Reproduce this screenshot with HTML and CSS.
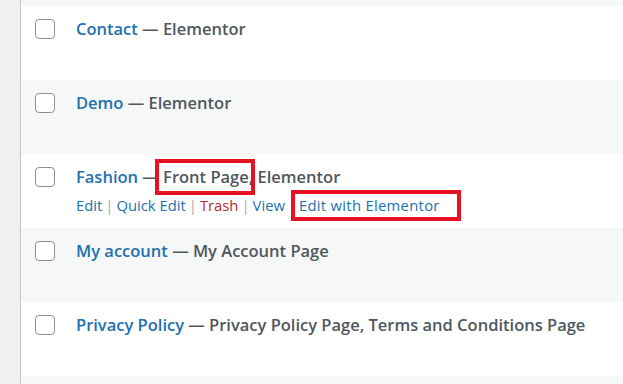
FILE: index.html
```html
<!DOCTYPE html>
<html lang="en">

<head>
    <meta charset="UTF-8">
    <meta name="viewport" content="width=device-width, initial-scale=1.0">
    <title>Pages</title>
    <link rel="stylesheet" href="styles.css">
</head>

<body>
    <div class="wrap">
        <div class="list">
            <div class="row alt stub"></div>

            <div class="row">
                <div class="check"><span class="box"></span></div>
                <div class="title">
                    <a class="row-title" href="#">Contact</a><span class="state"> — Elementor</span>
                </div>
            </div>

            <div class="row alt">
                <div class="check"><span class="box"></span></div>
                <div class="title">
                    <a class="row-title" href="#">Demo</a><span class="state"> — Elementor</span>
                </div>
            </div>

            <div class="row">
                <div class="check"><span class="box"></span></div>
                <div class="title">
                    <a class="row-title" href="#">Fashion</a><span class="state"> — <span class="mark mark-front">Front Page</span>, Elementor</span>
                    <div class="actions">
                        <a href="#">Edit</a><span class="sep">|</span><a href="#">Quick Edit</a><span class="sep">|</span><a class="trash" href="#">Trash</a><span class="sep">|</span><a href="#">View</a><span class="gap"></span><a class="mark mark-edit" href="#">Edit with Elementor</a>
                    </div>
                </div>
            </div>

            <div class="row alt">
                <div class="check"><span class="box"></span></div>
                <div class="title">
                    <a class="row-title" href="#">My account</a><span class="state"> — My Account Page</span>
                </div>
            </div>

            <div class="row">
                <div class="check"><span class="box"></span></div>
                <div class="title">
                    <a class="row-title" href="#">Privacy Policy</a><span class="state"> — Privacy Policy Page, Terms and Conditions Page</span>
                </div>
            </div>

            <div class="row alt stub"></div>
        </div>
    </div>
</body>

</html>
```

FILE: styles.css
```css
body {
    margin: 0;
    background: #f0f0f1;
    font-family: "Open Sans", "Noto Sans", Arial, sans-serif;
    color: #3c434a;
    height: 384px;
    overflow: hidden;
}

.wrap {
    padding-left: 20px;
}

.list {
    border-left: 1px solid #c3c4c7;
    background: #fff;
}

.row {
    display: flex;
    height: 74px;
    background: #fff;
}

.row.alt {
    background: #f6f7f7;
}

.row.stub {
    height: 6px;
}

.row.stub:last-child {
    height: 10px;
}

.check {
    width: 55px;
    padding: 13px 0 0 14px;
    box-sizing: border-box;
}

.box {
    display: block;
    width: 18px;
    height: 18px;
    border: 1px solid #8c8f94;
    border-radius: 4px;
    background: #fff;
}

.title {
    padding-top: 12px;
}

.row-title,
.state {
    font-size: 16.5px;
    font-weight: 600;
    line-height: 22px;
}

a {
    color: #2271b1;
    text-decoration: none;
}

.state {
    color: #50575e;
}

.actions {
    margin-top: 7px;
    font-size: 14.8px;
    line-height: 20px;
}

.actions .sep {
    color: #a7aaad;
    padding: 0 3px;
}

.actions .gap {
    display: inline-block;
    width: 14px;
}

.actions .trash {
    color: #b32d2e;
}

.actions .mark-edit {
    letter-spacing: 0.3px;
}

/* red highlight boxes */
.mark {
    position: relative;
}

.mark::after {
    content: "";
    position: absolute;
    border: 4px solid #e81123;
    pointer-events: none;
}

.mark-front::after {
    left: -8px;
    right: -6px;
    top: -6px;
    bottom: -7px;
}

.mark-edit::after {
    left: -8px;
    right: -21px;
    top: -5px;
    bottom: -6px;
}
```
